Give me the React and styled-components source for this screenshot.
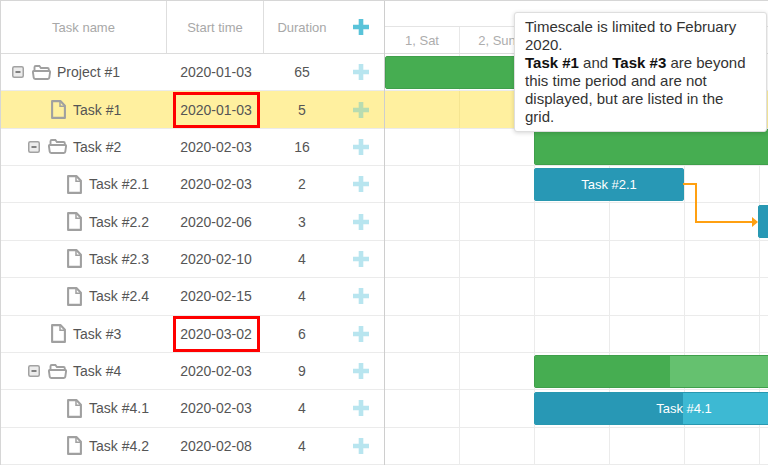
import React from "react";
import styled, { createGlobalStyle } from "styled-components";

const Global = createGlobalStyle`
  html, body { margin: 0; padding: 0; background: #fff; }
  body { font-family: "Liberation Sans", Arial, sans-serif; }
`;

const Frame = styled.div`
  position: relative;
  width: 768px;
  height: 465px;
  box-sizing: border-box;
  border-top: 1px solid #d6d6d6;
  border-left: 1px solid #d6d6d6;
  display: flex;
  overflow: hidden;
`;
const GridPane = styled.div`
  width: 384px;
  flex: none;
  box-sizing: border-box;
  border-right: 1px solid #cecece;
  display: flex;
  flex-direction: column;
`;
const GridHeader = styled.div`
  height: 53px;
  flex: none;
  box-sizing: border-box;
  border-bottom: 1px solid #dcdcdc;
  display: grid;
  grid-template-columns: 166px 97px 76px 44px;
  font-size: 13px;
  color: #a8a8a8;
`;
const HeadCell = styled.div`
  display: flex;
  align-items: center;
  justify-content: center;
  border-right: ${(p) => (p.$line ? "1px solid #dedede" : "none")};
`;
const GridRow = styled.div`
  flex: 1;
  min-height: 0;
  box-sizing: border-box;
  border-bottom: 1px solid #ebebeb;
  display: grid;
  grid-template-columns: 166px 97px 76px 44px;
  align-items: center;
  font-size: 14px;
  color: #555;
  background: ${(p) => (p.$active ? "#fff09f" : "transparent")};
`;
const NameCell = styled.div`
  display: flex;
  align-items: center;
  padding-left: ${(p) => p.$indent}px;
`;
const Center = styled.div`
  display: flex;
  justify-content: center;
  align-items: center;
`;
const PlusCell = styled.div`
  display: flex;
  justify-content: center;
  align-items: center;
  padding-right: 2px;
`;
const DateBox = styled.div`
  width: 87px;
  height: 36px;
  margin-left: 1px;
  box-sizing: border-box;
  display: flex;
  align-items: center;
  justify-content: center;
  border: ${(p) => (p.$flagged ? "3px solid #f00" : "3px solid transparent")};
`;
const Toggle = styled.svg`
  width: 12px;
  height: 12px;
  flex: none;
  margin-right: 8px;
`;
const FolderIcon = styled.svg`
  width: 19px;
  height: 15px;
  flex: none;
  margin-right: 6px;
`;
const FileIcon = styled.svg`
  width: 15px;
  height: 19px;
  flex: none;
  margin-right: 7px;
`;
const Plus = styled.svg`
  display: block;
  opacity: ${(p) => (p.$strong ? 0.85 : 0.36)};
`;

const TimePane = styled.div`
  flex: 1;
  min-width: 0;
  display: flex;
  flex-direction: column;
`;
const ScaleTop = styled.div`
  height: 26px;
  flex: none;
  box-sizing: border-box;
  border-bottom: 1px solid #e4e4e4;
`;
const ScaleDays = styled.div`
  height: 27px;
  flex: none;
  box-sizing: border-box;
  border-bottom: 1px solid #dcdcdc;
  display: flex;
`;
const DayCell = styled.div`
  width: 75px;
  flex: none;
  box-sizing: border-box;
  border-right: 1px solid #e8e8e8;
  display: flex;
  align-items: center;
  justify-content: center;
  font-size: 13px;
  color: #adadad;
  white-space: nowrap;
`;
const TimeRow = styled.div`
  flex: 1;
  min-height: 0;
  box-sizing: border-box;
  border-bottom: 1px solid #ebebeb;
  display: flex;
  align-items: center;
  overflow: hidden;
  padding-left: ${(p) => p.$start || 0}px;
  background-color: ${(p) => (p.$active ? "#fff09f" : "transparent")};
  background-image: repeating-linear-gradient(
    to right,
    transparent 0 74px,
    ${(p) => (p.$active ? "#f5e591" : "#ebebeb")} 74px 75px
  );
`;
const Bar = styled.div`
  position: relative;
  flex: none;
  width: ${(p) => p.$width}px;
  height: ${(p) => p.$height || 33}px;
  box-sizing: border-box;
  border-radius: 2px;
  overflow: hidden;
  display: flex;
  align-items: center;
  justify-content: center;
  font-size: 13px;
  color: #fff;
  background: ${(p) => (p.$kind === "project" ? "#65c16f" : "#3db9d3")};
  border: 1px solid ${(p) => (p.$kind === "project" ? "#3f9f4b" : "#2898b0")};
`;
const Progress = styled.div`
  position: absolute;
  left: 0;
  top: 0;
  bottom: 0;
  background: ${(p) => (p.$kind === "project" ? "#46ad51" : "#2898b5")};
`;
const BarLabel = styled.span`
  position: relative;
`;
const LinkArrow = styled.svg`
  position: absolute;
  left: 682px;
  top: 178px;
`;
const Note = styled.div`
  position: absolute;
  left: 513px;
  top: 11px;
  width: 253px;
  height: 120px;
  box-sizing: border-box;
  padding: 5px 20px 0 10px;
  background: #fff;
  border: 1px solid #dedede;
  border-radius: 3px;
  box-shadow: 0 1px 4px rgba(0, 0, 0, 0.16);
  font-size: 15px;
  line-height: 18px;
  color: #333;
`;
const Strong = styled.b`
  color: #111;
`;

const ToggleGlyph = () => (
  <Toggle viewBox="0 0 12 12">
    <rect x="0.75" y="0.75" width="10.5" height="10.5" rx="1.5" fill="#ececec" stroke="#a2a2a2" strokeWidth="1.5" />
    <rect x="3.5" y="5.2" width="5" height="1.6" fill="#666" />
  </Toggle>
);
const FolderGlyph = () => (
  <FolderIcon viewBox="0 0 19 15" fill="none" stroke="#a0a0a0" strokeWidth="1.9">
    <path d="M2.5 6V2.2C2.5 1.4 3 1 3.8 1h3.6l1.5 2h6.6c.8 0 1.3.5 1.3 1.3V6" />
    <path d="M1.8 6h15.4c.6 0 .9.4.9 1l-.8 5.7c-.1.8-.6 1.3-1.4 1.3H3.1c-.8 0-1.3-.5-1.4-1.3L.9 7c0-.6.3-1 .9-1z" />
  </FolderIcon>
);
const FileGlyph = () => (
  <FileIcon viewBox="0 0 15 19" fill="none" stroke="#a0a0a0" strokeWidth="2.1">
    <path d="M1.1 1.1h8.3l4.5 4.7v12.1H1.1z" strokeLinejoin="round" />
    <path d="M9 1v5.2h5" strokeWidth="1.5" />
  </FileIcon>
);
const PlusGlyph = ({ strong }) => (
  <Plus $strong={strong} width="16" height="16" viewBox="0 0 16 16">
    <path d="M5.7 0h4.6v5.7H16v4.6h-5.7V16H5.7v-5.7H0V5.7h5.7z" fill="#3db9d3" />
  </Plus>
);

const rows = [
  { name: "Project #1", date: "2020-01-03", dur: 65, indent: 11, folder: true, start: 0, width: 140, kind: "project", fill: 1 },
  { name: "Task #1", date: "2020-01-03", dur: 5, indent: 50, flagged: true, active: true },
  { name: "Task #2", date: "2020-02-03", dur: 16, indent: 27, folder: true, start: 149, width: 240, kind: "project", fill: 1, tall: 36 },
  { name: "Task #2.1", date: "2020-02-03", dur: 2, indent: 66, start: 149, width: 150, kind: "task", fill: 1, label: true },
  { name: "Task #2.2", date: "2020-02-06", dur: 3, indent: 66, start: 373, width: 20, kind: "task", fill: 1 },
  { name: "Task #2.3", date: "2020-02-10", dur: 4, indent: 66 },
  { name: "Task #2.4", date: "2020-02-15", dur: 4, indent: 66 },
  { name: "Task #3", date: "2020-03-02", dur: 6, indent: 50, flagged: true },
  { name: "Task #4", date: "2020-02-03", dur: 9, indent: 27, folder: true, start: 149, width: 300, kind: "project", fill: 0.453 },
  { name: "Task #4.1", date: "2020-02-03", dur: 4, indent: 66, start: 149, width: 300, kind: "task", fill: 0.497, label: true },
  { name: "Task #4.2", date: "2020-02-08", dur: 4, indent: 66 },
];
const days = ["1, Sat", "2, Sun", "3, Mon", "4, Tue", "5, Wed"];

export default function App() {
  return (
    <Frame>
      <Global />
      <GridPane>
        <GridHeader>
          <HeadCell $line>Task name</HeadCell>
          <HeadCell $line>Start time</HeadCell>
          <HeadCell>Duration</HeadCell>
          <PlusCell><PlusGlyph strong /></PlusCell>
        </GridHeader>
        {rows.map((r) => (
          <GridRow key={r.name} $active={r.active}>
            <NameCell $indent={r.indent}>
              {r.folder && <ToggleGlyph />}
              {r.folder ? <FolderGlyph /> : <FileGlyph />}
              {r.name}
            </NameCell>
            <Center><DateBox $flagged={r.flagged}>{r.date}</DateBox></Center>
            <Center>{r.dur}</Center>
            <PlusCell><PlusGlyph /></PlusCell>
          </GridRow>
        ))}
      </GridPane>
      <TimePane>
        <ScaleTop />
        <ScaleDays>
          {days.map((d) => <DayCell key={d}>{d}</DayCell>)}
        </ScaleDays>
        {rows.map((r) => (
          <TimeRow key={r.name} $active={r.active} $start={r.start}>
            {r.width && (
              <Bar $kind={r.kind} $width={r.width} $height={r.tall}>
                <Progress $kind={r.kind} style={{ width: `${r.fill * 100}%` }} />
                {r.label && <BarLabel>{r.name}</BarLabel>}
              </Bar>
            )}
          </TimeRow>
        ))}
      </TimePane>
      <LinkArrow width="80" height="50" viewBox="0 0 80 50">
        <path d="M0 5h13v38H70" fill="none" stroke="#ffa011" strokeWidth="2" />
        <path d="M69 38l6 5-6 5z" fill="#ffa011" />
      </LinkArrow>
      <Note>
        Timescale is limited to February 2020.<br />
        <Strong>Task #1</Strong> and <Strong>Task #3</Strong> are beyond this time period and are not displayed, but are listed in the grid.
      </Note>
    </Frame>
  );
}
